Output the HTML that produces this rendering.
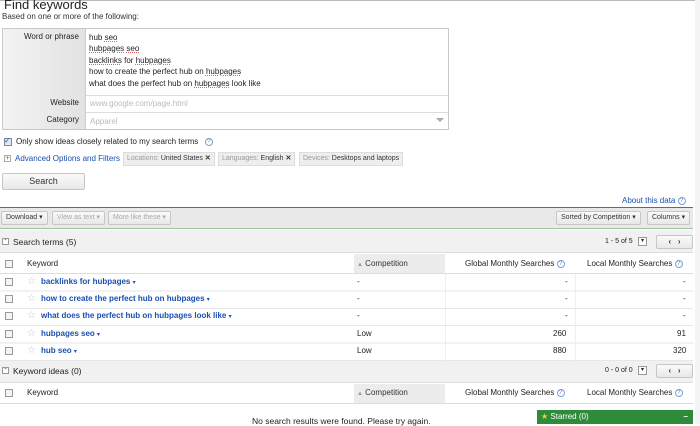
<!DOCTYPE html>
<html><head><style>
*{box-sizing:border-box;margin:0;padding:0}
body{width:700px;height:424px;overflow:hidden;background:#fff;font-family:"Liberation Sans",Arial,sans-serif;font-size:8px;color:#222;position:relative}
.a{position:absolute;white-space:nowrap}
.blue{color:#1a4fb0}
.q{display:inline-block;width:8px;height:8px;border:1px solid #7aa0d8;border-radius:50%;font-size:6px;line-height:6px;text-align:center;color:#5a86c8;vertical-align:middle}
.cb{position:absolute;width:8px;height:8px;border:1px solid #999;background:#f4f4f4}
.star{position:absolute;color:#b8cbe8;font-size:10px;line-height:10px}
.btn{position:absolute;height:14px;border:1px solid #c6c6c6;background:linear-gradient(#fafafa,#e8e8e8);font-size:7px;line-height:12px;padding:0 4px;color:#333;border-radius:2px}
.dis{color:#aaa}
.chip{position:absolute;top:152px;height:14px;background:#eee;border:1px solid #ddd;font-size:7px;line-height:12px;padding:0 3px;color:#333}
.chip span{color:#999}
.ul{text-decoration:underline dotted #d66;text-decoration-thickness:1px}
</style></head><body>
<div class="a" style="left:0;top:0;width:700px;height:1px;background:#bbb"></div>
<div class="a" style="left:4px;top:-3px;font-size:13px;color:#222">Find keywords</div>
<div class="a" style="left:2px;top:12px;font-size:8px;color:#333">Based on one or more of the following:</div>

<div class="a" style="left:2px;top:28px;width:447px;height:102px;border:1px solid #c8c8c8;background:#fff"></div>
<div class="a" style="left:3px;top:29px;width:83px;height:100px;background:linear-gradient(90deg,#f3f3f3,#e2e2e2);border-right:1px solid #ccc"></div>
<div class="a" style="left:3px;top:32px;width:76px;text-align:right;font-size:8px">Word or phrase</div>
<div class="a" style="left:89px;top:32px;font-size:8px;line-height:11.4px">hub <span class="ul">seo</span><br><span class="ul">hubpages</span> <span class="ul">seo</span><br><span class="ul">backlinks</span> for <span class="ul">hubpages</span><br>how to create the perfect hub on <span class="ul">hubpages</span><br>what does the perfect hub on <span class="ul">hubpages</span> look like</div>
<div class="a" style="left:86px;top:95px;width:362px;height:1px;background:#ddd"></div>
<div class="a" style="left:86px;top:112px;width:362px;height:1px;background:#ddd"></div>
<div class="a" style="left:3px;top:98px;width:76px;text-align:right">Website</div>
<div class="a" style="left:90px;top:99px;color:#bbb">www.google.com/page.html</div>
<div class="a" style="left:3px;top:115px;width:76px;text-align:right">Category</div>
<div class="a" style="left:90px;top:117px;color:#bbb">Apparel</div>
<div class="a" style="left:436px;top:118px;width:0;height:0;border-left:4px solid transparent;border-right:4px solid transparent;border-top:4px solid #aaa"></div>

<div class="cb" style="left:4px;top:138px;border-color:#889;background:#dde5f5"></div>
<div class="a" style="left:4px;top:136px;font-size:8px;color:#3355aa">✓</div>
<div class="a" style="left:16px;top:137px">Only show ideas closely related to my search terms &nbsp; <span class="q">?</span></div>
<div class="a" style="left:4px;top:155px;width:7px;height:7px;border:1px solid #aaa;font-size:7px;line-height:5px;text-align:center;color:#666">+</div>
<div class="a blue" style="left:15px;top:154px">Advanced Options and Filters</div>
<div class="chip" style="left:123px"><span>Locations:</span> United States <b>✕</b></div>
<div class="chip" style="left:218px"><span>Languages:</span> English <b>✕</b></div>
<div class="chip" style="left:299px"><span>Devices:</span> Desktops and laptops</div>
<div class="btn" style="left:2px;top:173px;width:83px;height:17px;text-align:center;font-size:9px;line-height:15px">Search</div>

<div class="a blue" style="left:622px;top:196px">About this data <span class="q">?</span></div>
<div class="a" style="left:0;top:207px;width:693px;height:1px;background:#3a8a3a"></div>
<div class="a" style="left:0;top:208px;width:693px;height:21px;background:#e9e9e9;border-bottom:1px solid #9fc39f"></div>
<div class="btn" style="left:1px;top:211px">Download ▾</div>
<div class="btn dis" style="left:52px;top:211px">View as text ▾</div>
<div class="btn dis" style="left:108px;top:211px">More like these ▾</div>
<div class="btn" style="left:556px;top:211px">Sorted by Competition ▾</div>
<div class="btn" style="left:647px;top:211px">Columns ▾</div>

<div class="a" style="left:0;top:230px;width:693px;height:23px;background:#f1f1f1;border-bottom:1px solid #ddd"></div>
<div class="a" style="left:2px;top:238px;width:7px;height:7px;border:1px solid #999;background:#fff;font-size:7px;line-height:4px;text-align:center">-</div>
<div class="a" style="left:13px;top:237px;font-size:8.5px">Search terms (5)</div>
<div class="a" style="left:605px;top:238px;font-size:7px">1 - 5 of 5</div>
<div class="a" style="left:638px;top:237px;width:9px;height:9px;border:1px solid #999;background:#fff;font-size:6px;line-height:7px;text-align:center">▾</div>
<div class="btn" style="left:656px;top:235px;width:37px;font-weight:bold;font-size:8px;text-align:center">‹ &nbsp; ›</div>

<div class="a" style="left:354px;top:254px;width:91px;height:20px;background:#ececec"></div>
<div class="cb" style="left:5px;top:260px"></div>
<div class="a" style="left:27px;top:259px">Keyword</div>
<div class="a" style="left:357px;top:259px;color:#333"><span style="color:#999;font-size:6px">▲</span> Competition</div>
<div class="a" style="left:465px;top:259px">Global Monthly Searches <span class="q">?</span></div>
<div class="a" style="left:587px;top:259px">Local Monthly Searches <span class="q">?</span></div>
<div class="a" style="left:0;top:273px;width:693px;height:1px;background:#ddd"></div>

<div class="a" style="left:0;top:274px;width:693px;height:87px;background:repeating-linear-gradient(#fff 0,#fff 16.4px,#e6e6e6 16.4px,#e6e6e6 17.4px)"></div>
<div class="a" style="left:445px;top:274px;width:1px;height:87px;background:#eee"></div>
<div class="a" style="left:575px;top:274px;width:1px;height:87px;background:#eee"></div>

<div class="cb" style="left:5px;top:278px"></div><div class="star" style="left:27px;top:277px">☆</div>
<div class="a blue" style="left:41px;top:277px;font-weight:bold">backlinks for hubpages <span style="font-weight:normal;font-size:6px">▾</span></div>
<div class="a" style="left:357px;top:277px">-</div><div class="a" style="left:565px;top:277px">-</div><div class="a" style="left:683px;top:277px">-</div>

<div class="cb" style="left:5px;top:295px"></div><div class="star" style="left:27px;top:294px">☆</div>
<div class="a blue" style="left:41px;top:294px;font-weight:bold">how to create the perfect hub on hubpages <span style="font-weight:normal;font-size:6px">▾</span></div>
<div class="a" style="left:357px;top:294px">-</div><div class="a" style="left:565px;top:294px">-</div><div class="a" style="left:683px;top:294px">-</div>

<div class="cb" style="left:5px;top:312px"></div><div class="star" style="left:27px;top:311px">☆</div>
<div class="a blue" style="left:41px;top:311px;font-weight:bold">what does the perfect hub on hubpages look like <span style="font-weight:normal;font-size:6px">▾</span></div>
<div class="a" style="left:357px;top:311px">-</div><div class="a" style="left:565px;top:311px">-</div><div class="a" style="left:683px;top:311px">-</div>

<div class="cb" style="left:5px;top:330px"></div><div class="star" style="left:27px;top:329px">☆</div>
<div class="a blue" style="left:41px;top:329px;font-weight:bold">hubpages seo <span style="font-weight:normal;font-size:6px">▾</span></div>
<div class="a" style="left:357px;top:329px">Low</div><div class="a" style="left:553px;top:329px">260</div><div class="a" style="left:677px;top:329px">91</div>

<div class="cb" style="left:5px;top:347px"></div><div class="star" style="left:27px;top:346px">☆</div>
<div class="a blue" style="left:41px;top:346px;font-weight:bold">hub seo <span style="font-weight:normal;font-size:6px">▾</span></div>
<div class="a" style="left:357px;top:346px">Low</div><div class="a" style="left:553px;top:346px">880</div><div class="a" style="left:673px;top:346px">320</div>

<div class="a" style="left:0;top:361px;width:693px;height:22px;background:#f1f1f1;border-bottom:1px solid #ddd"></div>
<div class="a" style="left:2px;top:367px;width:7px;height:7px;border:1px solid #999;background:#fff;font-size:7px;line-height:4px;text-align:center">-</div>
<div class="a" style="left:13px;top:366px;font-size:8.5px">Keyword ideas (0)</div>
<div class="a" style="left:605px;top:367px;font-size:7px">0 - 0 of 0</div>
<div class="a" style="left:638px;top:366px;width:9px;height:9px;border:1px solid #999;background:#fff;font-size:6px;line-height:7px;text-align:center">▾</div>
<div class="btn" style="left:656px;top:364px;width:37px;font-weight:bold;font-size:8px;text-align:center">‹ &nbsp; ›</div>

<div class="a" style="left:354px;top:384px;width:91px;height:19px;background:#ececec"></div>
<div class="cb" style="left:5px;top:389px"></div>
<div class="a" style="left:27px;top:388px">Keyword</div>
<div class="a" style="left:357px;top:388px;color:#333"><span style="color:#999;font-size:6px">▲</span> Competition</div>
<div class="a" style="left:465px;top:388px">Global Monthly Searches <span class="q">?</span></div>
<div class="a" style="left:587px;top:388px">Local Monthly Searches <span class="q">?</span></div>
<div class="a" style="left:0;top:403px;width:693px;height:1px;background:#ddd"></div>

<div class="a" style="left:252px;top:416px;font-size:8.5px">No search results were found. Please try again.</div>
<div class="a" style="left:537px;top:410px;width:156px;height:14px;background:#2e8b3a;color:#fff;font-size:8px;line-height:14px;padding-left:4px"><span style="color:#f0d040">★</span> Starred (0)<span style="position:absolute;right:5px;font-weight:bold">–</span></div>
<div class="a" style="left:695px;top:0;width:5px;height:424px;background:#f4f4f4"></div>
</body></html>
